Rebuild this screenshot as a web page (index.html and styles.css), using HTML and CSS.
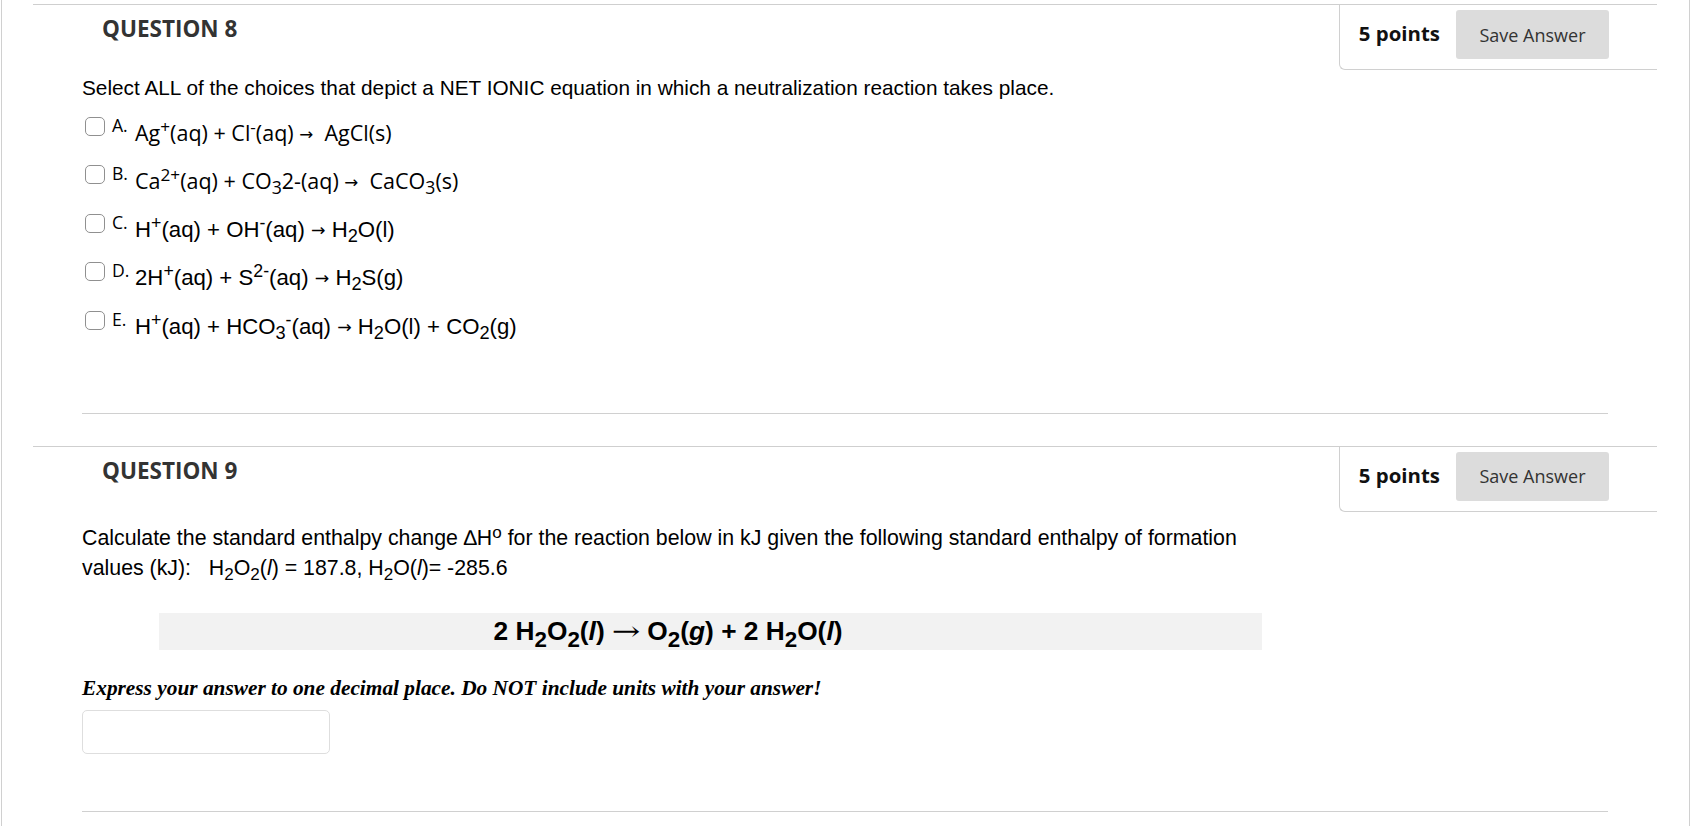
FILE: index.html
```html
<!DOCTYPE html>
<html lang="en">
<head>
<meta charset="utf-8">
<title>Questions</title>
<link rel="stylesheet" href="styles.css">
</head>
<body>
<div class="frame">
  <section class="question">
    <div class="q-head">
      <h2 class="q-title">QUESTION 8</h2>
      <div class="points-box">
        <span class="points">5 points</span>
        <button class="save" type="button">Save Answer</button>
      </div>
    </div>
    <div class="q-body">
      <p class="prompt">Select ALL of the choices that depict a NET IONIC equation in which a neutralization reaction takes place.</p>
      <ul class="options">
        <li class="opt"><span class="cb"></span><span class="lbl">A.</span><span class="eq os">Ag<sup>+</sup>(aq) + Cl<sup>-</sup>(aq) <span class="arr">→</span>&nbsp; AgCl(s)</span></li>
        <li class="opt"><span class="cb"></span><span class="lbl">B.</span><span class="eq os">Ca<sup>2+</sup>(aq) + CO<sub>3</sub>2-(aq) <span class="arr">→</span>&nbsp; CaCO<sub>3</sub>(s)</span></li>
        <li class="opt"><span class="cb"></span><span class="lbl">C.</span><span class="eq">H<sup>+</sup>(aq) + OH<sup>-</sup>(aq) <span class="arr">→</span> H<sub>2</sub>O(l)</span></li>
        <li class="opt"><span class="cb"></span><span class="lbl">D.</span><span class="eq">2H<sup>+</sup>(aq) + S<sup>2-</sup>(aq) <span class="arr">→</span> H<sub>2</sub>S(g)</span></li>
        <li class="opt"><span class="cb"></span><span class="lbl">E.</span><span class="eq">H<sup>+</sup>(aq) + HCO<sub>3</sub><sup>-</sup>(aq) <span class="arr">→</span> H<sub>2</sub>O(l) + CO<sub>2</sub>(g)</span></li>
      </ul>
      <hr class="sep sep-q8">
    </div>
  </section>

  <section class="question">
    <div class="q-head">
      <h2 class="q-title">QUESTION 9</h2>
      <div class="points-box">
        <span class="points">5 points</span>
        <button class="save" type="button">Save Answer</button>
      </div>
    </div>
    <div class="q-body">
      <p class="calc">Calculate the standard enthalpy change ∆H<sup class="deg">o</sup> for the reaction below in kJ given the following standard enthalpy of formation values (kJ):&nbsp;&nbsp; H<sub>2</sub>O<sub>2</sub>(<i>l</i>) = 187.8, H<sub>2</sub>O(<i>l</i>)= -285.6</p>
      <div class="eqbox"><span>2 H<sub>2</sub>O<sub>2</sub>(<i>l</i>) <span class="arrow">→</span> O<sub>2</sub>(<i>g</i>) + 2 H<sub>2</sub>O(<i>l</i>)</span></div>
      <p class="express">Express your answer to one decimal place. Do NOT include units with your answer!</p>
      <input class="answer" type="text" aria-label="Answer">
      <hr class="sep sep-q9">
    </div>
  </section>
</div>
</body>
</html>
```

FILE: styles.css
```css
html, body {
  margin: 0;
  padding: 0;
  overflow: hidden;
  background: #fff;
}

body {
  font-family: "Liberation Sans", Arial, sans-serif;
  color: #000;
}

.frame {
  margin-left: 1px;
  width: 1689px;
  height: 826px;
  box-sizing: border-box;
  border-left: 1px solid #d0d0d0;
  border-right: 1px solid #d0d0d0;
  padding-top: 4px;
  overflow: hidden;
}

.question {
  margin: 0 32px 0 31px;
  border-top: 1px solid #cfcfcf;
}

.q-head {
  display: flex;
  align-items: flex-start;
}

.q-title {
  margin: 9px 0 0 69px;
  font-family: "Open Sans", sans-serif;
  font-weight: 700;
  font-size: 22.5px;
  line-height: 30px;
  color: #333;
}

.points-box {
  margin-left: auto;
  display: flex;
  align-items: center;
  gap: 16px;
  padding: 5px 48px 10px 19px;
  border-left: 1px solid #d0d0d0;
  border-bottom: 1px solid #d0d0d0;
  border-bottom-left-radius: 6px;
}

.points {
  font-family: "Open Sans", sans-serif;
  font-weight: 700;
  font-size: 20.4px;
  color: #111;
  margin-bottom: 3px;
}

.save {
  height: 49px;
  padding: 0 23.5px;
  border: 0;
  border-radius: 3px;
  background: #dcdcdc;
  color: #333;
  font-family: "Open Sans", sans-serif;
  font-size: 18px;
}

.q-body {
  padding: 0 49px 32px 49px;
}

.prompt {
  margin: 3px 0 0;
  font-size: 20.8px;
  line-height: 30px;
}

.options {
  list-style: none;
  margin: 13px 0 0;
  padding: 0;
  display: flex;
  flex-direction: column;
  gap: 16.4px;
}

.opt {
  display: flex;
  align-items: flex-start;
  height: 32px;
}

.cb {
  flex: none;
  width: 20px;
  height: 19px;
  box-sizing: border-box;
  border: 1.5px solid #909090;
  border-radius: 5px;
  margin: 1px 7px 0 3px;
  background: #fff;
}

.lbl {
  flex: none;
  width: 23px;
  font-family: "Open Sans", sans-serif;
  font-size: 17.6px;
  line-height: 20px;
  margin-top: -1px;
}

.eq {
  font-size: 22.2px;
  line-height: 30px;
  margin-top: 2px;
  white-space: nowrap;
}

.eq.os {
  font-family: "Open Sans", sans-serif;
  font-size: 21.5px;
}

sup, sub {
  line-height: 0;
}

.eq sup {
  font-size: 0.8em;
  vertical-align: 0.45em;
}

.eq sub {
  font-size: 0.82em;
  vertical-align: -0.28em;
}

.arr {
  font-family: "DejaVu Sans", sans-serif;
  font-size: 0.78em;
  vertical-align: 0.08em;
}

.sep {
  border: 0;
  border-top: 1px solid #d0d0d0;
  height: 0;
  margin: 0;
}

.sep-q8 {
  margin-top: 71px;
}

.calc {
  margin: 11px 0 0;
  font-size: 21.33px;
  line-height: 30.5px;
  max-width: 1200px;
}

.calc sup {
  font-size: 0.8em;
  vertical-align: 0.42em;
}

.calc sub {
  font-size: 0.8em;
  vertical-align: -0.28em;
}

.eqbox {
  margin: 29px 0 0 77px;
  width: 1103px;
  height: 37px;
  box-sizing: border-box;
  padding-right: 85px;
  background: #f2f2f2;
  display: flex;
  align-items: center;
  justify-content: center;
  font-weight: 700;
  font-size: 26.3px;
  line-height: 37px;
}

.eqbox sub {
  font-size: 0.85em;
  vertical-align: -0.3em;
}

.arrow {
  display: inline-block;
  font-weight: 400;
  font-family: "DejaVu Serif", serif;
  transform: scaleX(1.3);
  margin: 0 3px;
}

.express {
  margin: 23px 0 0;
  font-family: "Liberation Serif", "Times New Roman", serif;
  font-weight: 700;
  font-style: italic;
  font-size: 21.33px;
  line-height: 30px;
}

.answer {
  display: block;
  margin: 7px 0 0;
  width: 248px;
  height: 44px;
  box-sizing: border-box;
  border: 1px solid #dedede;
  border-radius: 5px;
  padding: 0 8px;
  font-size: 18px;
  background: #fff;
}

.sep-q9 {
  margin-top: 57px;
}
```
